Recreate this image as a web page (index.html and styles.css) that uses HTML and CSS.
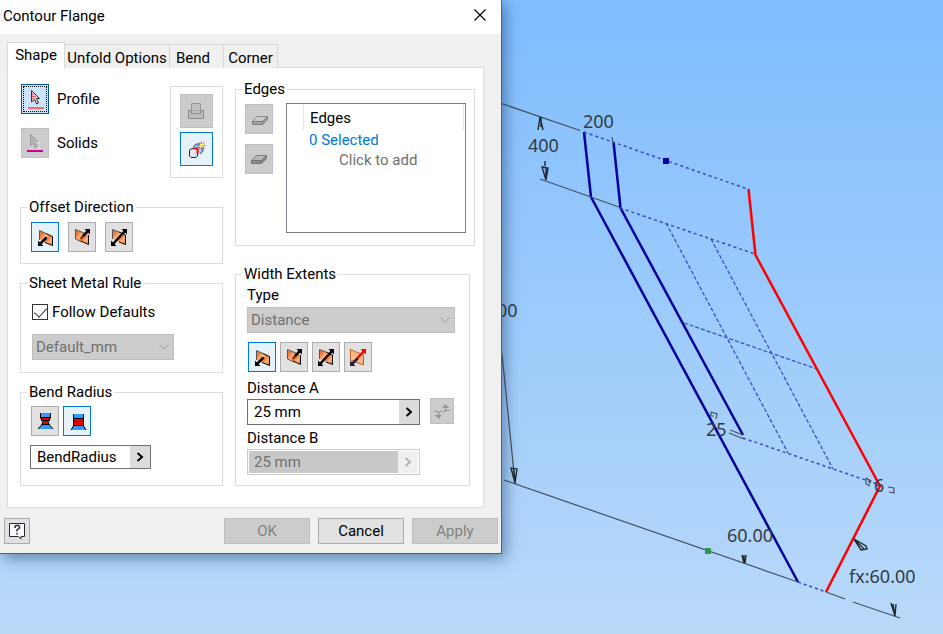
FILE: index.html
```html
<!DOCTYPE html>
<html lang="en">
<head>
<meta charset="utf-8">
<title>Contour Flange</title>
<link rel="stylesheet" href="styles.css">
</head>
<body>
<svg class="defs" aria-hidden="true">
  <defs>
    <linearGradient id="copper" x1="0" y1="0" x2="1" y2="1">
      <stop offset="0" stop-color="#d87038"/><stop offset=".25" stop-color="#f08444"/>
      <stop offset=".42" stop-color="#ffb884"/><stop offset=".58" stop-color="#f07c38"/>
      <stop offset=".75" stop-color="#ffb078"/><stop offset="1" stop-color="#f07830"/>
    </linearGradient>
    <symbol id="side-a" viewBox="1 1 26 28">
      <path d="M8.500 8.500L21.500 14.500V23.500L8.500 18Z" fill="url(#copper)"/>
      <path d="M8.500 18V8.500L15 11.500" fill="none" stroke="#555"/>
      <path d="M15 11.500L21.500 14.500V23.500L14 20.500" fill="none" stroke="#000"/>
      <path d="M15.500 15.500L9 22" stroke="#000" stroke-width="2.500"/>
      <path d="M7 24V18.500L12.500 24Z"/>
    </symbol>
    <symbol id="side-b" viewBox="1 1 26 28">
      <path d="M7.500 7.500L20.500 13V22.500L7.500 17Z" fill="url(#copper)"/>
      <path d="M16 11L7.500 7.500V17L14 20" fill="none" stroke="#555"/>
      <path d="M20.500 13V22.500L13 19" fill="none" stroke="#000"/>
      <path d="M12.500 17L16 13" stroke="#8a3510" stroke-width="2.500"/>
      <path d="M15 14L20 9" stroke="#000" stroke-width="2.500"/>
      <path d="M22 7V12.500L16.500 7Z"/>
    </symbol>
    <symbol id="side-both" viewBox="1 1 26 28">
      <path d="M7.500 7.500L20.500 13V22.500L7.500 17Z" fill="url(#copper)"/>
      <path d="M7.500 17V7.500L14 10" fill="none" stroke="#555"/>
      <path d="M20.500 13V22.500L14 20M14 10L20.500 13" fill="none" stroke="#000"/>
      <path d="M8 22L20 9" stroke="#000" stroke-width="2.500"/>
      <path d="M22 7V12.500L16.500 7ZM6 24V18.500L11.500 24Z"/>
    </symbol>
    <symbol id="side-asym" viewBox="1 1 26 28">
      <path d="M6.500 7.500L19.500 13V23L6.500 18Z" fill="#ffb888" stroke="#b8602c"/>
      <path d="M8 22L14 16" stroke="#223" stroke-width="2.500"/>
      <path d="M6 24V18.500L11.500 24Z" fill="#223"/>
      <path d="M13.500 16L20 9" stroke="#f00" stroke-width="2.500"/>
      <path d="M22 7V12.500L16.500 7Z" fill="#f00"/>
    </symbol>
    <symbol id="plate" viewBox="1 1 26 28">
      <path d="M7.500 17.500L12 12.500H22.500L17.500 17.500Z" fill="#c8c8c8" stroke="#8c8c8c"/>
      <path d="M7.500 17.500H17.500V20.500H7.500ZM17.500 17.500L22.500 12.500V15.500L17.500 20.500" fill="#a4a4a4" stroke="#7c7c7c"/>
    </symbol>
    <symbol id="plate-dark" viewBox="1 1 26 28">
      <path d="M6.500 16.500L11 11.500H21.500L16.500 16.500Z" fill="#b8b8b8" stroke="#858585"/>
      <path d="M6.500 16.500H16.500V19.500H6.500ZM16.500 16.500L21.500 11.500V14.500L16.500 19.500" fill="#8c8c8c" stroke="#747474"/>
    </symbol>
    <symbol id="chevron" viewBox="0 0 10 10">
      <path d="M2.500 1L7 5L2.500 9" fill="none" stroke="currentColor" stroke-width="2"/>
    </symbol>
  </defs>
</svg>

<svg class="scene" viewBox="0 0 943 634" preserveAspectRatio="xMinYMin slice" role="img" aria-label="Sketch preview">
  <g class="profile">
    <path d="M584 132L591 197L798 582"/>
    <path d="M613.500 142L620.500 208L743 435"/>
  </g>
  <g class="construction">
    <path d="M584 132L749 189.500"/>
    <path d="M620 208L755 254"/>
    <path d="M743 438L877 484"/>
    <path d="M798 582L826 592"/>
  </g>
  <g class="construction fine">
    <path d="M666 223L788 453"/>
    <path d="M711 239L833 469"/>
    <path d="M684 323L817 369"/>
  </g>
  <g class="dimension">
    <path d="M500 103L580 130.500"/>
    <path d="M540 179L619 207"/>
    <path d="M504 480L798 582"/>
    <path d="M826 592L845 599M853 602L900 618"/>
    <path d="M502 354L515 483"/>
    <path d="M612 137L613 143"/>
    <path d="M730 430L743 435M729 433L744 439"/>
    <path d="M711 412L717 414L716 419M711 412V416L714 416"/>
    <path d="M866 478V484L870 486M866 478L871 481L869 484M888 487L894 488V493L889 492"/>
  </g>
  <g class="arrows">
    <path d="M540 117L538 130M540 117L543 130M541 117V127"/>
    <path d="M546 180L542 167L548 168ZM545 161V166M546 180V168"/>
    <path d="M515 483L511 468L517 469ZM515 483L514 470"/>
    <path d="M744 563L742 555M745 563L746 555M744 555V563"/>
    <path d="M895 616L891 603M895 616L896 604M895 616L893 604"/>
    <path d="M854 539L861 550L867 549L866 546ZM854 539L864 549"/>
  </g>
  <path class="edge" d="M748.500 189L755.500 255L880 486L826 592"/>
  <rect x="663" y="158" width="6" height="6" fill="#00009c"/>
  <rect x="705" y="548" width="6" height="6" fill="#32954f"/>
  <g class="values">
    <text x="583" y="128">200</text>
    <text x="528" y="152">400</text>
    <text x="497" y="317">00</text>
    <text x="706" y="436">25</text>
    <text x="874" y="492">6</text>
    <text x="727" y="542">60.00</text>
    <text x="849" y="583">fx:60.00</text>
  </g>
</svg>

<section class="dialog" role="dialog" aria-labelledby="dialog-title">
  <header class="titlebar">
    <h1 id="dialog-title">Contour Flange</h1>
    <button class="close" type="button" aria-label="Close">
      <svg width="12" height="12" viewBox="0 0 12 12"><path d="M.5 .5L11.500 11.500M11.500 .5L.5 11.500" stroke="#000" stroke-width="1.200"/></svg>
    </button>
  </header>

  <div class="tabs" role="tablist">
    <button class="tab current" role="tab" aria-selected="true" type="button">Shape</button>
    <button class="tab unfold" role="tab" type="button">Unfold Options</button>
    <button class="tab bend" role="tab" type="button">Bend</button>
    <button class="tab corner" role="tab" type="button">Corner</button>
  </div>

  <div class="panel" role="tabpanel">
    <div class="column left">
      <div class="pick-row">
        <div class="picks">
          <div class="pick">
            <button class="tool focused" id="pick-profile" type="button">
              <svg viewBox="1 1 26 28">
                <path d="M10.500 6.500L18.500 14.500H15.500L17.500 19L15.500 20L13.500 15.500L10.500 18Z" fill="#f4c8cc" stroke="#303040"/>
                <path d="M12 10V15M14 12V14" stroke="#c01010" stroke-dasharray="1 1"/>
                <path d="M7 24H23" stroke="#ff6868" stroke-width="2"/>
              </svg>
            </button>
            <label for="pick-profile">Profile</label>
          </div>
          <div class="pick">
            <button class="tool" id="pick-solids" type="button" disabled>
              <svg viewBox="1 1 26 28">
                <path d="M9.500 6.500L16.500 13.500H14.500L16.500 19L14.500 20L12.500 15.500L9.500 17.500Z" fill="#b4b4b4" stroke="#9a9a9a"/>
                <path d="M14 14L18 15V20L15 20" stroke="#fff" fill="none" stroke-dasharray="1 1"/>
                <path d="M6 23H22" stroke="#cc0099" stroke-width="2"/>
              </svg>
            </button>
            <label for="pick-solids">Solids</label>
          </div>
        </div>
        <div class="mode">
          <button class="tool wide" type="button" disabled aria-label="Join">
            <svg viewBox="1 1 31 32">
              <path d="M8.500 16.500H23.500V24.500H8.500Z" fill="#bdbdbd" stroke="#898989"/>
              <path d="M11.500 9.500H20.500V19.500H11.500Z" fill="#bbb" fill-opacity=".7" stroke="#929292"/>
            </svg>
          </button>
          <button class="tool wide on" type="button" aria-label="New solid">
            <svg viewBox="1 1 31 32">
              <path d="M13 15L16 12H21L23 15V19L20 22" fill="#a9c0ec" stroke="#1d4fa5"/>
              <path d="M9.500 18L12 16.500H17.500V24L16 25.500H11L9.500 24Z" fill="#e4e4ec" stroke="#20294a"/>
              <path d="M13 16.500H17.500V22" stroke="#e01818" stroke-width="2" fill="none"/>
              <path d="M21.500 9.500V17.500M17.500 13.500H25.500M18.500 10.500L24.500 16.500M24.500 10.500L18.500 16.500" stroke="#e8561c"/>
              <circle cx="21.500" cy="13.500" r="2" fill="#ffe45c"/>
            </svg>
          </button>
        </div>
      </div>

      <fieldset>
        <legend>Offset Direction</legend>
        <div class="tools spaced">
          <button class="tool on" type="button" aria-label="Side A"><svg><use href="#side-a"/></svg></button>
          <button class="tool" type="button" aria-label="Side B"><svg><use href="#side-b"/></svg></button>
          <button class="tool" type="button" aria-label="Both sides"><svg><use href="#side-both"/></svg></button>
        </div>
      </fieldset>

      <fieldset>
        <legend>Sheet Metal Rule</legend>
        <div class="rule">
          <label class="check"><input type="checkbox" checked>Follow Defaults</label>
          <div class="select rule-select">
            <select disabled aria-label="Sheet metal rule"><option>Default_mm</option></select>
            <svg class="arrow" viewBox="0 0 10 6"><path d="M.5 .5L5 5L9.500 .5" fill="none" stroke="#a0a0a0"/></svg>
          </div>
        </div>
      </fieldset>

      <fieldset>
        <legend>Bend Radius</legend>
        <div class="radius">
          <div class="tools">
            <button class="tool" type="button" aria-label="Narrowed relief">
              <svg viewBox="1 1 26 28">
                <path d="M9 7H20V12H9ZM11 19H18L22 23H7Z" fill="#3399ff"/>
                <path d="M9 12H20L17 15L18 19H11L12 15Z" fill="#e00000"/>
                <path d="M9.500 7V12L12 15L11 18.500L7 23M19.500 7V12L17 15L18 18.500L22 23M9 11.500H20M10 14.500H19M10 18.500H19" fill="none" stroke="#000"/>
              </svg>
            </button>
            <button class="tool on" type="button" aria-label="Straight relief">
              <svg viewBox="1 1 26 28">
                <path d="M10 8H21V13H10ZM10 20H21L23 24H8Z" fill="#3399ff"/>
                <path d="M10 12H21V20H10Z" fill="#f00000"/>
                <path d="M10.500 8V20L8 24M20.500 8V20L23 24M10 12.500H21M10 15.500H21M10 19.500H21" fill="none" stroke="#000"/>
              </svg>
            </button>
          </div>
          <div class="value short">
            <input type="text" value="BendRadius" aria-label="Bend radius">
            <button type="button" aria-label="More"><svg><use href="#chevron"/></svg></button>
          </div>
        </div>
      </fieldset>
    </div>

    <div class="column right">
      <fieldset>
        <legend>Edges</legend>
        <div class="edges">
          <div class="stack">
            <button class="tool" type="button" disabled aria-label="Edge select"><svg><use href="#plate"/></svg></button>
            <button class="tool" type="button" disabled aria-label="Loop select"><svg><use href="#plate-dark"/></svg></button>
          </div>
          <div class="list">
            <div class="list-head">Edges</div>
            <div class="selected">0 Selected</div>
            <div class="add">Click to add</div>
          </div>
        </div>
      </fieldset>

      <fieldset class="extents">
        <legend>Width Extents</legend>
        <div class="extent-body">
          <label for="type">Type</label>
          <div class="select type-select">
            <select id="type" disabled><option>Distance</option></select>
            <svg class="arrow" viewBox="0 0 10 6"><path d="M.5 .5L5 5L9.500 .5" fill="none" stroke="#a0a0a0"/></svg>
          </div>
          <div class="tools">
            <button class="tool on" type="button" aria-label="Direction A"><svg><use href="#side-a"/></svg></button>
            <button class="tool" type="button" aria-label="Direction B"><svg><use href="#side-b"/></svg></button>
            <button class="tool" type="button" aria-label="Symmetric"><svg><use href="#side-both"/></svg></button>
            <button class="tool" type="button" aria-label="Asymmetric"><svg><use href="#side-asym"/></svg></button>
          </div>
          <label for="dist-a">Distance A</label>
          <div class="value-row">
            <div class="value">
              <input id="dist-a" type="text" value="25 mm">
              <button type="button" aria-label="More"><svg><use href="#chevron"/></svg></button>
            </div>
            <button class="tool flip" type="button" disabled aria-label="Flip">
              <svg viewBox="1 1 22 24">
                <path d="M4 13.500H9M15 12.500H20M8.500 13V19M15.500 8V14M9 15.500L11 12.500L13 14.500L15 12" fill="none" stroke="#969696"/>
                <path d="M15.500 6L19 10H12ZM8.500 21L5 17H12Z" fill="#969696"/>
              </svg>
            </button>
          </div>
          <label for="dist-b">Distance B</label>
          <div class="value off">
            <input id="dist-b" type="text" value="25 mm" disabled>
            <button type="button" disabled aria-label="More"><svg><use href="#chevron"/></svg></button>
          </div>
        </div>
      </fieldset>
    </div>
  </div>

  <footer class="actions">
    <button class="tool help" type="button" aria-label="Help">
      <svg viewBox="0 0 24 24">
        <path d="M4.500 4.500H19.500V17.500H16V20L13.500 17.500H4.500Z" fill="#f8f8fc" stroke="#222a36"/>
        <path d="M10 9V7.500L11 6.500H13.500L14.500 7.500V9L12 11V12.500M12 14V15.500" fill="none" stroke="#222a36" stroke-width="1.500"/>
      </svg>
    </button>
    <button class="action" type="button" disabled>OK</button>
    <button class="action" type="button">Cancel</button>
    <button class="action" type="button" disabled>Apply</button>
  </footer>
</section>
</body>
</html>
```
FILE: styles.css
```css
* { box-sizing: border-box; }

body {
  margin: 0;
  min-height: 100vh;
  overflow: hidden;
  background: linear-gradient(#80bdff, #b9d9f9);
  color: #000;
  font: 15px/20px Roboto, "Liberation Sans", sans-serif;
}

button, input, select { margin: 0; font: inherit; color: inherit; }
button { padding: 0; }
svg { display: block; }

.defs { position: absolute; width: 0; height: 0; }

.scene { width: 100%; height: 100vh; }
.scene path { fill: none; }
.profile path { stroke: #00009c; stroke-width: 2.500; stroke-linejoin: round; }
.construction path { stroke: #3a46c8; stroke-width: 1.500; stroke-dasharray: 3 3; }
.construction.fine path { stroke-width: 1.200; stroke-dasharray: 4 2; }
.dimension path { stroke: #44505c; stroke-width: 1.200; }
.arrows path { stroke: #202830; stroke-width: 1.400; }
.edge { stroke: #f00; stroke-width: 2.500; stroke-linejoin: round; }
.values { fill: #333b44; font: 18px "Noto Sans", sans-serif; }

.dialog {
  position: absolute;
  top: 0;
  left: 0;
  width: 502px;
  border: solid #4c6478;
  border-width: 0 1px 1px 0;
  background: #f0f0f0;
  box-shadow: 3px 4px 14px rgba(20, 50, 90, .5);
}

.titlebar {
  display: flex;
  justify-content: space-between;
  align-items: center;
  height: 34px;
  padding: 0 15px 2px 3px;
  background: #fff;
}
.titlebar h1 { margin: 0; font-size: 15px; font-weight: 400; }
.close { margin-top: -2px; border: 0; background: none; }

.tabs { display: flex; align-items: flex-end; height: 34px; padding: 0 7px; }
.tab {
  height: 24px;
  padding-top: 2px;
  border: 1px solid #d9d9d9;
  border-width: 1px 1px 0 0;
  background: #f0f0f0;
}
.tab.current {
  z-index: 1;
  width: 58px;
  height: 27px;
  margin-bottom: -1px;
  padding: 0 0 2px;
  border-left-width: 1px;
  background: #fff;
}
.unfold { width: 105px; }
.bend { width: 54px; padding-right: 7px; }
.corner { width: 54px; }

.panel {
  display: flex;
  gap: 12px;
  margin: -1px 17px 0 7px;
  padding: 11px 8px 21px 12px;
  border: 1px solid #dcdcdc;
  background: #fff;
}
.column { display: flex; flex-direction: column; }
.left { flex: 203; gap: 9px; }
.right { flex: 240; gap: 18px; }

fieldset { min-width: 0; margin: 0; padding: 0 6px; border: 1px solid #dcdcdc; }
legend { padding: 0 2px; }

.pick-row { display: flex; justify-content: space-between; padding: 7px 0 10px 1px; }
.picks { display: flex; flex-direction: column; gap: 14px; margin-top: -2px; }
.pick { display: flex; align-items: center; gap: 8px; }
.mode {
  display: flex;
  flex-direction: column;
  gap: 4px;
  padding: 7px 9px 11px;
  border: 1px solid #dcdcdc;
}

.tool { width: 28px; height: 30px; border: 1px solid #adadad; background: #e1e1e1; }
.tool svg { width: 100%; height: 100%; }
.tool:disabled { border-color: #bfbfbf; background: #ccc; }
.tool.on { border-color: #0078d7; background: #e5f1fb; }
.tool.focused {
  border-color: #005499;
  background: #cce4f7;
  outline: 1px dotted #000;
  outline-offset: -3px;
}
.tool.wide { width: 33px; height: 34px; }
.tool.flip { width: 24px; height: 26px; }
.tool.help { width: 26px; height: 26px; margin-right: auto; }

.tools { display: flex; gap: 4px; }
.tools.spaced { gap: 9px; padding: 5px 4px 11px; }

.rule { display: flex; flex-direction: column; gap: 12px; padding: 9px 5px 12px; }
.check { display: flex; align-items: center; gap: 4px; }
.check input {
  appearance: none;
  display: grid;
  justify-content: center;
  width: 16px;
  height: 16px;
  border: 1px solid #333;
  background: #fff;
}
.check input:checked::after {
  content: "";
  width: 6px;
  height: 11px;
  border: solid #333;
  border-width: 0 1px 1px 0;
  rotate: 42deg;
}

.select { display: grid; align-items: center; }
.select > * { grid-area: 1 / 1; }
.select select {
  appearance: none;
  width: 100%;
  height: 26px;
  padding: 0 3px;
  border: 1px solid #bfbfbf;
  border-radius: 0;
  background: #ccc;
  color: #707070;
  opacity: 1;
}
.arrow { justify-self: end; width: 10px; height: 6px; margin-right: 5px; }
.rule-select { width: 142px; }
.type-select { width: 208px; margin: 2px 0 9px; }

.radius { display: flex; flex-direction: column; gap: 9px; padding: 4px 3px 16px; }
.radius .tools { padding-left: 1px; }

.value { display: flex; width: 173px; height: 26px; border: 1px solid #707070; background: #fff; }
.value input { flex: 1; min-width: 0; padding: 0 6px; border: 0; background: none; }
.value button { display: grid; place-items: center; width: 20px; border: 0; background: #dcdcdc; }
.value button svg { width: 10px; height: 10px; }
.value.short { width: 121px; height: 24px; }
.value.off { padding: 1px; border-color: #ccc; }
.value.off input { padding: 0 5px; background: #c8c8c8; color: #707070; }
.value.off button { background: #f0f0f0; color: #b4b4b4; }

.edges { display: flex; gap: 13px; padding: 4px 2px 12px 3px; }
.stack { display: flex; flex-direction: column; gap: 10px; padding-top: 1px; }
.list { flex: 1; height: 130px; padding: 1px; border: 1px solid #7a7f89; }
.list-head { height: 25px; margin-left: 15px; padding: 3px 6px; border: solid #e2e2e2; border-width: 0 1px; }
.selected { padding-left: 21px; color: #0078d7; }
.add { padding-left: 51px; color: #707070; }

.extents { margin-right: 5px; }
.extent-body { display: flex; flex-direction: column; padding: 1px 5px 10px; }
.extent-body .tools { padding: 0 0 6px 1px; }
.value-row { display: flex; gap: 10px; align-items: flex-start; padding-bottom: 3px; }
.extent-body .value { margin-top: 1px; }

.actions { display: flex; gap: 8px; padding: 10px 3px 9px 4px; }
.action { width: 86px; height: 26px; border: 1px solid #adadad; background: #e1e1e1; }
.action:disabled { border-color: #bfbfbf; background: #ccc; color: #838383; }
```
